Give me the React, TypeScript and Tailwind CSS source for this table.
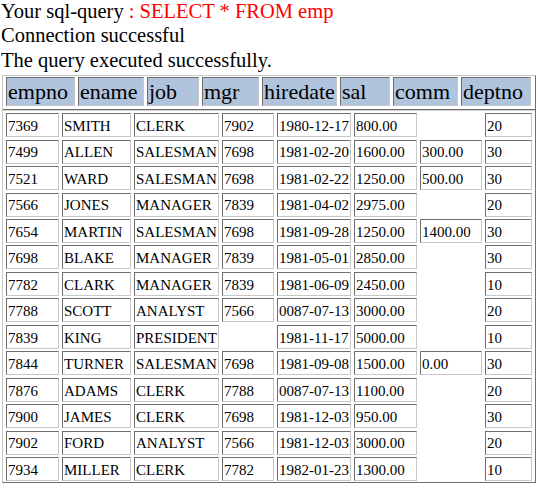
const headers = [
  { label: "empno", w: 69 },
  { label: "ename", w: 66 },
  { label: "job", w: 52 },
  { label: "mgr", w: 57 },
  { label: "hiredate", w: 75 },
  { label: "sal", w: 50 },
  { label: "comm", w: 65 },
  { label: "deptno", w: 70 },
];

// widths of the data cells, px
const colWidths = [53, 69, 85, 52, 74, 63, 62, 47];

const rows: string[][] = [
  ["7369", "SMITH", "CLERK", "7902", "1980-12-17", "800.00", "", "20"],
  ["7499", "ALLEN", "SALESMAN", "7698", "1981-02-20", "1600.00", "300.00", "30"],
  ["7521", "WARD", "SALESMAN", "7698", "1981-02-22", "1250.00", "500.00", "30"],
  ["7566", "JONES", "MANAGER", "7839", "1981-04-02", "2975.00", "", "20"],
  ["7654", "MARTIN", "SALESMAN", "7698", "1981-09-28", "1250.00", "1400.00", "30"],
  ["7698", "BLAKE", "MANAGER", "7839", "1981-05-01", "2850.00", "", "30"],
  ["7782", "CLARK", "MANAGER", "7839", "1981-06-09", "2450.00", "", "10"],
  ["7788", "SCOTT", "ANALYST", "7566", "0087-07-13", "3000.00", "", "20"],
  ["7839", "KING", "PRESIDENT", "", "1981-11-17", "5000.00", "", "10"],
  ["7844", "TURNER", "SALESMAN", "7698", "1981-09-08", "1500.00", "0.00", "30"],
  ["7876", "ADAMS", "CLERK", "7788", "0087-07-13", "1100.00", "", "20"],
  ["7900", "JAMES", "CLERK", "7698", "1981-12-03", "950.00", "", "30"],
  ["7902", "FORD", "ANALYST", "7566", "1981-12-03", "3000.00", "", "20"],
  ["7934", "MILLER", "CLERK", "7782", "1982-01-23", "1300.00", "", "10"],
];

export default function App() {
  return (
    <div
      className="w-[538px] h-[489px] bg-white text-black overflow-hidden"
      style={{ fontFamily: '"Liberation Serif", "DejaVu Serif", serif' }}
    >
      <div className="text-[20.5px] leading-[24.4px] -mt-[1px] pl-[1px]">
        <div>
          Your sql-query <span className="text-[#ff0000]">: SELECT * FROM emp</span>
        </div>
        <div>Connection successful</div>
        <div>The query executed successfully.</div>
      </div>

      <div className="ml-[2px] mt-[3px] w-[534px] border border-t-[#c8c8c8] border-l-[#c8c8c8] border-r-[#6e6e6e] border-b-[#6e6e6e]">
        {/* header row */}
        <div className="flex gap-[3px] pl-[3px] pt-[1px] pb-[3px]">
          {headers.map((h) => (
            <div
              key={h.label}
              className="h-[29px] flex items-center pl-[1px] bg-[#b0c4de] border border-t-[#6e6e6e] border-l-[#6e6e6e] border-r-[#c8c8c8] border-b-[#c8c8c8] text-[22px] whitespace-nowrap"
              style={{ width: h.w }}
            >
              {h.label}
            </div>
          ))}
        </div>
        <div className="h-[1px] bg-[#6e6e6e]" />
        <div className="h-[1px] bg-[#d0d0d0]" />

        {/* data rows */}
        <div className="flex flex-col gap-[2.46px] pl-[3px] pt-[2px] pb-[1px]">
          {rows.map((r) => (
            <div key={r[0]} className="flex gap-[3px]">
              {r.map((v, i) => (
                <div
                  key={i}
                  className={
                    "h-[24px] flex items-center pl-[1px] pt-[2px] text-[15px] whitespace-nowrap " +
                    (v === ""
                      ? "border border-transparent"
                      : "border border-t-[#6e6e6e] border-l-[#6e6e6e] border-r-[#c8c8c8] border-b-[#c8c8c8]")
                  }
                  style={{ width: colWidths[i] }}
                >
                  {v}
                </div>
              ))}
            </div>
          ))}
        </div>
      </div>
    </div>
  );
}
